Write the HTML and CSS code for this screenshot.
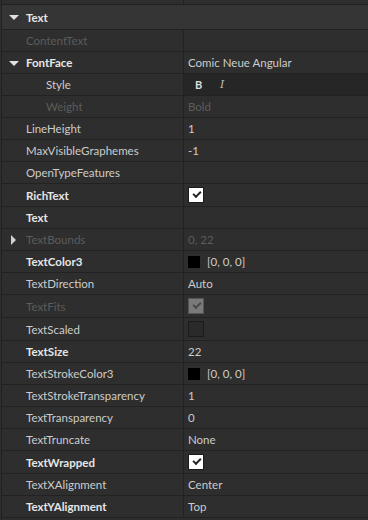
FILE: index.html
```html
<!DOCTYPE html>
<html lang="en">
<head>
  <meta charset="UTF-8">
  <title>Properties</title>
  <link rel="stylesheet" href="styles.css">
</head>
<body>

  <div class="props">
    <div class="row stub"><div class="name"></div><div class="value"></div></div>

    <div class="row group">
      <span class="arrow down"></span>
      <span class="group-title">Text</span>
    </div>

    <div class="row"><div class="name off">ContentText</div><div class="value"></div></div>
    <div class="row">
      <div class="name bold"><span class="arrow down"></span>FontFace</div>
      <div class="value">Comic Neue Angular</div>
    </div>
    <div class="row">
      <div class="name sub">Style</div>
      <div class="value style-pick"><span class="b">B</span><span class="i">I</span></div>
    </div>
    <div class="row"><div class="name sub off">Weight</div><div class="value off">Bold</div></div>
    <div class="row"><div class="name">LineHeight</div><div class="value">1</div></div>
    <div class="row"><div class="name">MaxVisibleGraphemes</div><div class="value">-1</div></div>
    <div class="row"><div class="name">OpenTypeFeatures</div><div class="value"></div></div>
    <div class="row tall">
      <div class="name bold">RichText</div>
      <div class="value"><span class="check on"></span></div>
    </div>
    <div class="row"><div class="name bold">Text</div><div class="value"></div></div>
    <div class="row">
      <div class="name off"><span class="arrow right"></span>TextBounds</div>
      <div class="value off">0, 22</div>
    </div>
    <div class="row">
      <div class="name bold">TextColor3</div>
      <div class="value"><span class="swatch"></span>[0, 0, 0]</div>
    </div>
    <div class="row"><div class="name">TextDirection</div><div class="value">Auto</div></div>
    <div class="row tall">
      <div class="name off">TextFits</div>
      <div class="value"><span class="check dim"></span></div>
    </div>
    <div class="row tall">
      <div class="name">TextScaled</div>
      <div class="value"><span class="check"></span></div>
    </div>
    <div class="row"><div class="name bold">TextSize</div><div class="value">22</div></div>
    <div class="row">
      <div class="name">TextStrokeColor3</div>
      <div class="value"><span class="swatch"></span>[0, 0, 0]</div>
    </div>
    <div class="row"><div class="name">TextStrokeTransparency</div><div class="value">1</div></div>
    <div class="row"><div class="name">TextTransparency</div><div class="value">0</div></div>
    <div class="row"><div class="name">TextTruncate</div><div class="value">None</div></div>
    <div class="row tall">
      <div class="name bold">TextWrapped</div>
      <div class="value"><span class="check on"></span></div>
    </div>
    <div class="row"><div class="name">TextXAlignment</div><div class="value">Center</div></div>
    <div class="row"><div class="name bold">TextYAlignment</div><div class="value">Top</div></div>
  </div>

</body>
</html>
```

FILE: styles.css
```css
body {
  margin: 0;
  background-color: #2e2e2e;
  font-family: Lato, "Open Sans", sans-serif;
  font-size: 11.5px;
  color: #cccccc;
}

.props {
  width: 366px;
  margin-left: 1px;
  border-left: 1px solid #222;
  border-right: 1px solid #1b1b1b;
  height: 520px;
  overflow: hidden;
  background-color: #2e2e2e;
}

.row {
  display: flex;
  height: 21px;
  border-bottom: 1px solid #222;
}

.row.tall {
  height: 22px;
}

.row.stub {
  height: 4px;
}

.name {
  position: relative;
  box-sizing: border-box;
  width: 182px;
  padding-left: 24px;
  border-right: 1px solid #222;
  display: flex;
  align-items: center;
  white-space: nowrap;
}

.name.sub {
  padding-left: 44px;
}

.value {
  flex: 1;
  padding-left: 4px;
  display: flex;
  align-items: center;
  white-space: nowrap;
}

.bold {
  font-weight: bold;
  color: #e6e6e6;
}

.off {
  color: #5c5c5c;
}

.group {
  height: 24px;
  background-color: #353535;
  align-items: center;
  padding-left: 24px;
  position: relative;
}

.group-title {
  font-weight: bold;
  color: #e6e6e6;
}

.arrow {
  position: absolute;
  left: 7px;
  top: 50%;
  width: 0;
  height: 0;
}

.arrow.down {
  margin-top: -2px;
  border-left: 5px solid transparent;
  border-right: 5px solid transparent;
  border-top: 5px solid #e0e0e0;
}

.arrow.right {
  left: 9px;
  margin-top: -5px;
  border-top: 5px solid transparent;
  border-bottom: 5px solid transparent;
  border-left: 5px solid #d0d0d0;
}

.style-pick {
  background-color: #262626;
  padding-left: 11px;
}

.style-pick .b {
  font-weight: bold;
  font-size: 11px;
  color: #dcdcdc;
  width: 25px;
}

.style-pick .i {
  font-family: "DejaVu Serif", serif;
  font-style: italic;
  font-size: 11px;
  color: #bdbdbd;
}

.check {
  display: inline-block;
  width: 14px;
  height: 14px;
  border: 1px solid #1b1b1b;
  background-color: #2a2a2a;
  position: relative;
}

.check.on {
  background-color: #ffffff;
  border-color: #1b1b1b;
}

.check.dim {
  background-color: #7a7a7a;
  border-color: #555;
}

.check.on::after,
.check.dim::after {
  content: "";
  position: absolute;
  left: 4px;
  top: 3px;
  width: 6px;
  height: 3px;
  border-left: 2px solid #222;
  border-bottom: 2px solid #222;
  transform: rotate(-45deg);
}

.check.dim::after {
  border-color: #4a4a4a;
}

.swatch {
  display: inline-block;
  width: 12px;
  height: 12px;
  background-color: #000;
  margin-right: 7px;
}
```
